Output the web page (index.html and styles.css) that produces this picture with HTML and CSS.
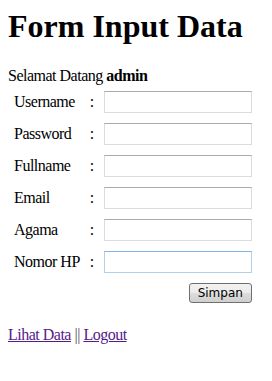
FILE: index.html
```html
<!DOCTYPE html>
<html lang="id">
<head>
    <meta charset="UTF-8">
    <title>Form Input Data</title>
    <link rel="stylesheet" href="styles.css">
</head>
<body>
    <h1>Form Input Data</h1>
    <div class="welcome">Selamat Datang <b>admin</b></div>
    <form class="data-form">
        <table class="form-table">
            <tr>
                <td>Username</td>
                <td>:</td>
                <td><input type="text" class="field"></td>
            </tr>
            <tr>
                <td>Password</td>
                <td>:</td>
                <td><input type="password" class="field"></td>
            </tr>
            <tr>
                <td>Fullname</td>
                <td>:</td>
                <td><input type="text" class="field"></td>
            </tr>
            <tr>
                <td>Email</td>
                <td>:</td>
                <td><input type="text" class="field"></td>
            </tr>
            <tr>
                <td>Agama</td>
                <td>:</td>
                <td><input type="text" class="field"></td>
            </tr>
            <tr>
                <td>Nomor HP</td>
                <td>:</td>
                <td><input type="text" class="field active"></td>
            </tr>
            <tr>
                <td colspan="3" class="actions"><button type="button" class="btn">Simpan</button></td>
            </tr>
        </table>
    </form>
    <div class="links">
        <a href="#">Lihat Data</a> <span class="bar">||</span> <a href="#">Logout</a>
    </div>
</body>
</html>
```

FILE: styles.css
```css
body {
    font-family: "Liberation Serif", "Times New Roman", serif;
    font-size: 16px;
    letter-spacing: -0.5px;
    color: #000;
    background: #fff;
    margin: 8px;
}
h1 {
    font-size: 32px;
    letter-spacing: normal;
    margin: 0 0 22px;
}
.welcome {
    line-height: 18px;
}
.data-form {
    margin: 0 0 17px;
}
.form-table {
    border-spacing: 2px;
}
.form-table td {
    padding: 4px;
}
.field {
    display: block;
    width: 148px;
    height: 22px;
    box-sizing: border-box;
    margin: 0;
    border: 1px solid #dcdcdc;
    border-top-color: #ababab;
    background: #fff;
    font-size: 13px;
}
.field.active {
    border-color: #b3d0ea;
    border-top-color: #7eb4ea;
}
.actions {
    text-align: right;
}
.btn {
    font-family: "DejaVu Sans", Tahoma, sans-serif;
    font-size: 12px;
    letter-spacing: normal;
    width: 63px;
    height: 20px;
    padding: 0;
    border: 1px solid #707070;
    border-radius: 3px;
    background: linear-gradient(#f2f2f2 0%, #ebebeb 50%, #dddddd 51%, #cfcfcf 100%);
    color: #000;
}
.links a {
    color: #551a8b;
}
.bar {
    color: #555;
}
```
